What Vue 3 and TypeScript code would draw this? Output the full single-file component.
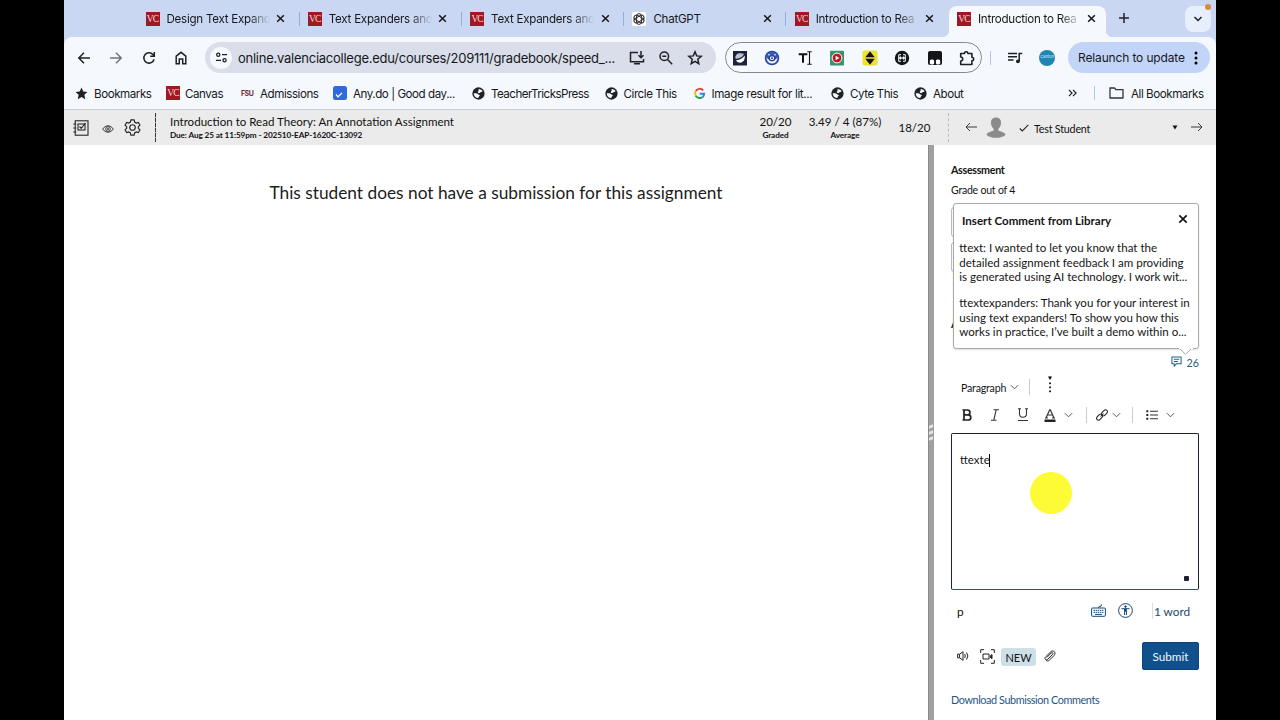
<script setup lang="ts">
import { ref } from 'vue'

interface Tab { title: string; icon: 'vc' | 'gpt'; active?: boolean }
interface Bookmark { label: string; icon: string; cls: string }

const tabs: Tab[] = [
  { title: 'Design Text Expand', icon: 'vc' },
  { title: 'Text Expanders and', icon: 'vc' },
  { title: 'Text Expanders and', icon: 'vc' },
  { title: 'ChatGPT', icon: 'gpt' },
  { title: 'Introduction to Rea', icon: 'vc' },
  { title: 'Introduction to Rea', icon: 'vc', active: true },
]

const bookmarks: Bookmark[] = [
  { label: 'Bookmarks', icon: 'star-solid', cls: 'b-main' },
  { label: 'Canvas', icon: 'vc', cls: 'b-canvas' },
  { label: 'Admissions', icon: 'fsu', cls: 'b-fsu' },
  { label: 'Any.do | Good day...', icon: 'check', cls: 'b-any' },
  { label: 'TeacherTricksPress', icon: 'globe', cls: 'b-ttp' },
  { label: 'Circle This', icon: 'globe', cls: 'b-circle' },
  { label: 'Image result for lit...', icon: 'google', cls: 'b-image' },
  { label: 'Cyte This', icon: 'globe', cls: 'b-cyte' },
  { label: 'About', icon: 'globe', cls: 'b-about' },
]

const extensions = ['e-planet', 'e-ball', 'e-text', 'e-play', 'e-updown', 'e-arrows', 'e-face', 'e-puzzle']

const library = [
  ['ttext: I wanted to let you know that the', 'detailed assignment feedback I am providing', 'is generated using AI technology. I work wit...'],
  ['ttextexpanders: Thank you for your interest in', 'using text expanders! To show you how this', 'works in practice, I’ve built a demo within o...'],
]

const comment = ref('ttexte')
</script>

<template>
  <div class="screen">
    <svg class="defs" aria-hidden="true">
      <symbol id="close" viewBox="0 0 10 10"><path d="M1.3 1.3 8.7 8.7M8.7 1.3 1.3 8.7" fill="none" stroke="currentColor" stroke-width="1.7" /></symbol>
      <symbol id="chev" viewBox="0 0 10 6"><path d="M1 1 5 5 9 1" fill="none" stroke="currentColor" stroke-width="1" /></symbol>
      <symbol id="gpt" viewBox="0 0 14 14">
        <rect width="14" height="14" rx="1.5" fill="#fff" />
        <g fill="none" stroke="#222" stroke-width=".95">
          <rect v-for="n in 3" :key="n" x="4.6" y="1.6" width="4.8" height="10.8" rx="2.4" :transform="`rotate(${n * 60} 7 7)`" />
        </g>
      </symbol>
      <symbol id="star-solid" viewBox="0 0 14 14"><path d="m7 .6 1.900 4.200 4.500.5-3.300 3.100.9 4.700L7 10.700l-4 2.400.9-4.700L.6 5.300l4.500-.5Z" fill="#202124" /></symbol>
      <symbol id="check" viewBox="0 0 14 14"><rect width="14" height="14" rx="2.500" fill="#2f69dd" /><path d="m3 8.500 2 2.300L9 7" fill="none" stroke="#fff" stroke-width="1.200" /></symbol>
      <symbol id="globe" viewBox="0 0 14 14">
        <circle cx="7" cy="7" r="6.600" fill="#202226" />
        <path d="M7.300 2.100c1.800 0 3.300 1 4.100 2.500-.5.800-1.400.9-2 .700-.5 1-1.500 1.200-2.600 1.100-.4 0-.6-.4-.5-.800.100-.8.900-.9.800-1.700-.1-.6-.2-1.200.2-1.800Z" fill="#f5f8fd" />
        <path d="M1.900 6.700c1.600.1 3.500-.1 4.600 1 .5.700 1.600.1 1.900 1 .3.900-.9 1-1 1.800-.1.600-.7 1.300-1.300 1.400-2.400-.3-4.400-2.500-4.200-5.200Z" fill="#f5f8fd" />
      </symbol>
      <symbol id="google" viewBox="0 0 14 14">
        <g fill="none" stroke-width="2.100">
          <path d="M11 3.700A5 5 0 0 0 3 4.300" stroke="#e24335" />
          <path d="M3 4.300a5 5 0 0 0-.1 5.200" stroke="#f4b90a" />
          <path d="M2.900 9.500a5 5 0 0 0 7.500 1.200" stroke="#2f9e51" />
          <path d="M10.400 10.700A5 5 0 0 0 12 7.200H7.200" stroke="#4179e5" />
        </g>
      </symbol>
      <symbol id="e-planet" viewBox="0 0 16 16"><rect x="1" y="1" width="14" height="14.500" fill="#1c2338" /><path d="M3.400 8.500C3 5 5.500 3 8.300 3.200c1.700 0 2.700.8 3.700.3-.2 1.500-1.500 3-3.300 4.100-1.700 1-3.500 1.500-5.300.9Z" fill="#b9c1d2" /><path d="M4 10.300c3.500.3 7-2.200 8.600-4.700.9 3.500-1.200 7.200-4.600 7.200-1.800 0-3.300-1-4-2.500Z" fill="#fff" /></symbol>
      <symbol id="e-ball" viewBox="0 0 16 16"><circle cx="8" cy="8" r="6.400" fill="#eef2ff" stroke="#24459f" stroke-width="1.700" /><path d="M2 8a6 6 0 0 1 12 0Z" fill="#355bb9" /><path d="M3.500 8.500h9" stroke="#24459f" stroke-width="1.500" /><rect x="5.400" y="5.800" width="5.200" height="4.800" rx="2" fill="#fff" stroke="#203d8e" stroke-width="1.200" /><circle cx="8" cy="8.200" r="1" fill="#203d8e" /><circle cx="5" cy="4.700" r=".8" fill="#fff" /><circle cx="11" cy="4.700" r=".8" fill="#fff" /></symbol>
      <symbol id="e-text" viewBox="0 0 16 16"><path d="M1.700 4.200h8.600M6 4v8.700" stroke="#111" stroke-width="2" /><path d="M10.300 1.700h4.400M12.500 1.700v12.600M10.300 14.300h4.400" fill="none" stroke="#111" stroke-width="1.100" /></symbol>
      <symbol id="e-play" viewBox="0 0 16 16"><rect x="1" y=".8" width="14" height="14.600" rx="1" fill="#379369" /><circle cx="8" cy="8" r="4.900" fill="#ba1828" stroke="#fff" stroke-width="1" /><path d="m6.600 5.700 3.800 2.300-3.800 2.300Z" fill="#fff" /></symbol>
      <symbol id="e-updown" viewBox="0 0 16 16"><rect x=".5" y=".5" width="15" height="15" rx="2" fill="#efe22c" /><path d="m8 1.300 4.700 5.900H3.300ZM8 14.700 3.300 8.800h9.400Z" fill="#141414" /></symbol>
      <symbol id="e-arrows" viewBox="0 0 16 16"><circle cx="8" cy="8" r="7.200" fill="#121519" /><path d="M7 4.700H4.700v6.600H7M9 4.700h2.300v6.600H9" fill="none" stroke="#fff" stroke-width="1" /><path d="M5.500 8h5M7 6.700 5.500 8 7 9.300M9 6.700 10.500 8 9 9.300" fill="none" stroke="#fff" stroke-width="1.200" /></symbol>
      <symbol id="e-face" viewBox="0 0 16 16"><rect x="1" y="1" width="14" height="14" rx="2" fill="#121417" /><rect x="2.800" y="9.500" width="4.300" height="5" rx="1.500" fill="#fff" /><rect x="8.900" y="9.500" width="4.300" height="5" rx="1.500" fill="#fff" /></symbol>
      <symbol id="e-puzzle" viewBox="0 0 16 16"><path d="M1.700 3.500h3.800a1.700 1.700 0 0 1 3.400 0h4V7.300a1.700 1.700 0 0 1 0 3.400v3.800H1.700V11a2 2 0 0 0 0-4Z" fill="none" stroke="#202124" stroke-width="1.600" stroke-linejoin="round" /></symbol>
    </svg>

    <div class="window">
      <div class="tabs">
        <div v-for="(t, i) in tabs" :key="i" class="tab" :class="{ active: t.active, sep: i < 4 }">
          <span v-if="t.icon === 'vc'" class="vc">VC</span>
          <svg v-else class="i14"><use href="#gpt" /></svg>
          <span class="title" :class="{ fade: t.icon === 'vc' }">{{ t.title }}</span>
          <svg class="x"><use href="#close" /></svg>
        </div>
        <svg class="plus" viewBox="0 0 12 12"><path d="M6 1v10M1 6h10" stroke="#202124" stroke-width="1.500" /></svg>
        <div class="tabmenu">
          <svg viewBox="0 0 10 6"><path d="M1.500 1 5 4.500 8.500 1" fill="none" stroke="#202124" stroke-width="1.500" /></svg>
          <i class="dot"></i>
        </div>
      </div>

      <div class="toolbar">
        <div class="nav">
          <svg viewBox="0 0 16 16"><path d="M14 8H3M8 2.800 2.800 8 8 13.200" /></svg>
          <svg viewBox="0 0 16 16" class="dim"><path d="M2 8h11M8 2.800 13.200 8 8 13.200" /></svg>
          <svg viewBox="0 0 16 16"><path d="M13.100 9.200A5.200 5.200 0 1 1 12 4.500L13.300 6M13.300 2v4.200H9.200" /></svg>
          <svg viewBox="0 0 16 16"><path d="M3.200 13.700V6.200L8 2.300l4.800 3.900v7.500H9.700V9H6.300v4.700Z" /></svg>
        </div>
        <div class="url">
          <span class="site"><svg viewBox="0 0 14 14"><path d="M7.500 4H13M1 10h5.500" /><circle cx="3.500" cy="4" r="1.700" /><circle cx="10.300" cy="10" r="1.700" /></svg></span>
          <span class="addr">online.valenciacollege.edu/courses/209111/gradebook/speed_...</span>
          <svg viewBox="0 0 16 16"><path d="M9 2.500H1.500v9.200h13V9M5 13.700h6M12 1v6.500M9.500 5.300 12 7.800l2.500-2.500" /></svg>
          <svg viewBox="0 0 16 16"><circle cx="6.300" cy="6.300" r="4.300" /><path d="m9.500 9.500 4.700 4.700M4.300 6.300h4" /></svg>
          <svg viewBox="0 0 16 16"><path d="m8 1.800 1.700 4.100 4.500.4-3.400 3 1 4.400L8 11.400l-3.800 2.300 1-4.400-3.400-3 4.500-.4Z" /></svg>
        </div>
        <div class="exts">
          <svg v-for="e in extensions" :key="e"><use :href="'#' + e" /></svg>
        </div>
        <i class="vsep"></i>
        <svg class="music" viewBox="0 0 16 16"><path d="M1 3.500h9M1 6.700h9M1 9.900h5.500M12.200 11V3.500h3" fill="none" stroke="#202124" stroke-width="1.500" /><circle cx="10.900" cy="11.300" r="1.900" fill="#202124" /></svg>
        <span class="avatar">Canton</span>
        <div class="relaunch"><span>Relaunch to update</span><svg viewBox="0 0 4 14"><circle cx="2" cy="2" r="1.500" /><circle cx="2" cy="7" r="1.500" /><circle cx="2" cy="12" r="1.500" /></svg></div>
      </div>

      <div class="bookmarks">
        <div v-for="b in bookmarks" :key="b.label" class="bm" :class="b.cls">
          <span v-if="b.icon === 'vc'" class="vc">VC</span>
          <span v-else-if="b.icon === 'fsu'" class="fsu">FSU</span>
          <svg v-else class="i14"><use :href="'#' + b.icon" /></svg>
          <span class="label">{{ b.label }}</span>
        </div>
        <svg class="more" viewBox="0 0 10 10"><path d="m1 1.500 3.500 3.500L1 8.500M5.500 1.500 9 5 5.500 8.500" fill="none" stroke="#202124" stroke-width="1.300" /></svg>
        <i class="vsep"></i>
        <svg class="folder" viewBox="0 0 15 12"><path d="M1 1h4.500L7 2.700h7v8.300H1Z" fill="none" stroke="#303338" stroke-width="1.300" stroke-linejoin="round" /></svg>
        <span class="label">All Bookmarks</span>
      </div>

      <header class="grader">
        <svg class="gbook" viewBox="0 0 16 16"><rect x="2.200" y=".8" width="12.800" height="14.400" /><rect x="5" y="4" width="7" height="6" /><path d="M.3 4h3M.3 8h3M.3 12h3M6.500 6.500 8.200 8.300 12.500 3" /></svg>
        <svg class="eye" viewBox="0 0 12 8"><path d="M.6 4Q3 .7 6 .7T11.400 4Q9 7.300 6 7.300T.6 4Z" /><circle cx="6" cy="4" r="2.300" /><circle cx="6" cy="4" r=".6" /></svg>
        <svg class="gear" viewBox="0 0 16 16"><path d="M6.500.8h3l.5 2.100 1.500.9 2-.6L15 5.700l-1.500 1.500v1.600L15 10.300l-1.500 2.500-2-.6-1.500.9-.5 2.100h-3L6 13.100l-1.500-.9-2 .6L1 10.300l1.500-1.500V7.200L1 5.700l1.500-2.500 2 .6L6 2.900Z" /><circle cx="8" cy="8" r="2.600" /></svg>
        <i class="dash"></i>
        <div class="heading">
          <div class="h1">Introduction to Read Theory: An Annotation Assignment</div>
          <div class="h2">Due: Aug 25 at 11:59pm - 202510-EAP-1620C-13092</div>
        </div>
        <div class="stat graded"><b>20/20</b><small>Graded</small></div>
        <div class="stat average"><b>3.49 / 4 (87%)</b><small>Average</small></div>
        <div class="count">18/20</div>
        <div class="student">
          <svg class="arrow" viewBox="0 0 12 10"><path d="M12 5H1M5 1 1 5l4 4" /></svg>
          <svg class="person" viewBox="0 0 20 21"><path d="M10 .5c3.400 0 5.300 2.300 5 5.700-.2 2.600-1.200 4.400-2.600 5.500v1.700c1 1 6.600 1.300 7.100 4.300-2 2.200-5.500 3.100-9.500 3.100S2.500 19.900.5 17.700c.5-3 6.100-3.300 7.100-4.300v-1.700C6.200 10.600 5.200 8.800 5 6.200 4.700 2.800 6.600.5 10 .5Z" fill="#8b8b8b" /></svg>
          <svg class="tick" viewBox="0 0 10 8"><path d="M.8 4.500 3.300 7 9.300.9" /></svg>
          <span class="name">Test Student</span>
          <svg class="caret" viewBox="0 0 6 5"><path d="M.5.500h5L3 4.500Z" /></svg>
          <svg class="arrow" viewBox="0 0 12 10"><path d="M0 5h11M7 1l4 4-4 4" /></svg>
        </div>
      </header>

      <div class="body">
        <main>This student does not have a submission for this assignment</main>
        <div class="split"><i></i><i></i><i></i></div>
        <aside>
          <div class="assess">Assessment</div>
          <div class="grade">Grade out of 4</div>
          <div class="covered">
            <i class="field one"></i>
            <i class="field two"></i>
            <div class="under">A</div>
            <div class="popover">
              <div class="ptitle"><span>Insert Comment from Library</span><svg><use href="#close" /></svg></div>
              <p v-for="(p, i) in library" :key="i"><span v-for="l in p" :key="l">{{ l }}</span></p>
              <svg class="tail" viewBox="0 0 14 7"><path d="M0 0H14V1H12L6.500 6.300 1 1H0Z" fill="#fff" /><path d="M1 1 6.500 6.300 12 1" fill="none" stroke="#aaa" /></svg>
            </div>
          </div>
          <div class="lib">
            <svg viewBox="0 0 12 12"><path d="M1 1h10v7.500H6L3.500 11V8.500H1ZM3 3.500h6M3 6h4.500" fill="none" stroke="#246084" stroke-width="1.100" /></svg>26
          </div>
          <div class="row1">
            <span>Paragraph</span><svg class="ch"><use href="#chev" /></svg><i class="tsep"></i>
            <svg class="kebab" viewBox="0 0 6 18"><path d="M1 .5h4L3 4Z" /><rect x="2.200" y="6.500" width="1.700" height="1.700" /><rect x="2.200" y="10.500" width="1.700" height="1.700" /><rect x="2.200" y="14.500" width="1.700" height="1.700" /></svg>
          </div>
          <div class="row2">
            <svg class="bold" viewBox="0 0 12 12"><path d="M1.500 1h5a2.300 2.300 0 0 1 0 4.800H2.500M2.500 5.800h4.700a2.600 2.600 0 0 1 0 5.200H1.500M3 1v10" fill="none" stroke="#222" stroke-width="1.700" /></svg>
            <svg class="ital" viewBox="0 0 12 12"><path d="M4.500.8H10M2 11.200h5.500M7.200.8l-2.400 10.400" fill="none" stroke="#333" stroke-width="1.100" /></svg>
            <svg class="und" viewBox="0 0 12 14"><path d="M1 .8h3M8 .8h3M2.500.8v5a3.500 3.500 0 0 0 7 0v-5M1 12.500h10" fill="none" stroke="#333" stroke-width="1.100" /></svg>
            <svg class="acol" viewBox="0 0 12 13"><path d="M2 9 5.700.8h.6L10 9M1 9h3M8 9h3M3.500 6h5" fill="none" stroke="#333" stroke-width="1.200" /><rect x=".5" y="10.500" width="11" height="2.500" fill="#222" /></svg>
            <svg class="ch"><use href="#chev" /></svg><i class="tsep"></i>
            <svg class="link" viewBox="0 0 12 12"><g fill="none" stroke="#222" stroke-width="1.050"><rect x=".2" y="6.200" width="6.800" height="3.900" rx="1.900" transform="rotate(-45 3.600 8.200)" /><rect x="5" y="1.900" width="6.800" height="3.900" rx="1.900" transform="rotate(-45 8.400 3.800)" /><path d="m4.500 7.500 3-3" /></g></svg>
            <svg class="ch"><use href="#chev" /></svg><i class="tsep"></i>
            <svg class="list" viewBox="0 0 12 10"><path d="M4 1.200h8M4 5h8M4 8.800h8" stroke="#333" stroke-width="1.100" /><path d="M.3 1.200h2M.3 5h2M.3 8.800h2" stroke="#222" stroke-width="2" /></svg>
            <svg class="ch"><use href="#chev" /></svg>
          </div>
          <div class="editor"><span>{{ comment }}</span><i class="cursor"></i><i class="halo"></i><i class="grip"></i></div>
          <div class="status">
            <span class="p">p</span>
            <svg class="kb" viewBox="0 0 15 13"><rect x=".6" y="4" width="13.800" height="8.300" rx="1" /><path d="M2.500 6.300h10M2.500 8.300h10" stroke-dasharray="1.500 .6" /><path d="M4 10.400h7M7.500 4q0-1.500 1.500-1.500T10.500.5" /></svg>
            <svg class="a11y" viewBox="0 0 15 15"><circle cx="7.500" cy="7.500" r="6.900" /><circle cx="7.500" cy="3.600" r=".8" fill="#154673" /><path d="M3.500 5.700h8M7.500 5.700v3M6.600 6v6M8.400 6v6" /></svg>
            <i class="tsep"></i><span class="words">1 word</span>
          </div>
          <div class="actions">
            <svg class="spk" viewBox="0 0 12 10"><path d="M.6 3.200h2L6 .7v8.600L2.600 6.800h-2ZM2.600 3.200v3.600M7.700 3q1.200 2 0 4M9.500 1.500q2.800 3.500 0 7" /></svg>
            <svg class="cam" viewBox="0 0 15 15"><path d="M.7 4V.7H4M11 .7h3.300V4M14.300 11v3.300H11M4 14.300H.7V11" /><path d="M3 5h6v5H3Z" /><path d="M10.300 6.900 12 5.500v4.200l-1.700-1.400Z" fill="#222" /></svg>
            <span class="new">NEW</span>
            <svg class="clip" viewBox="0 0 12 12"><path d="m2.800 7.500 4.500-4.600c1-1 2.400.4 1.400 1.400L4 9c-2 2-4.200-.3-2.300-2.200L6.500 2C9.300-.7 12.800 2.700 10 5.500l-4.700 4.800c-1 .9-2.300.9-3.300 0" /></svg>
            <button>Submit</button>
          </div>
          <a class="dl">Download Submission Comments</a>
        </aside>
      </div>
    </div>
  </div>
</template>

<style scoped>
* { box-sizing: border-box; }
.screen { width: 1280px; height: 720px; background: #000; padding: 0 64px; overflow: hidden; }
.defs { position: absolute; width: 0; height: 0; }
.window { width: 1152px; height: 720px; background: linear-gradient(#c9d7f3 60px, #fff 60px); font-family: Inter, sans-serif; font-size: 11.600px; color: #17181b; overflow: hidden; }
svg { display: block; flex: none; }
i { display: block; flex: none; }
.i14 { width: 14px; height: 14px; }
.vc { width: 14px; height: 14px; background: #a11722; color: #f4d9dc; font: 9.500px/14px "Liberation Serif", serif; letter-spacing: -.9px; text-align: center; flex: none; }

.tabs { display: flex; height: 37px; background: #c9d7f3; padding: 6px 5px 0 73.500px; }
.tab { position: relative; display: flex; align-items: center; width: 162.300px; height: 31px; padding: 0 0 6px 8px; flex: none; }
.tab.sep::after { content: ""; position: absolute; left: 161px; top: 6px; width: 1px; height: 14px; background: #91aee0; }
.tab.active { width: 157px; background: #f5f8fd; border-radius: 8px 8px 0 0; }
.tab.active::before, .tab.active::after { content: ""; position: absolute; bottom: 0; width: 7px; height: 7px; }
.tab.active::before { left: -7px; background: radial-gradient(circle at 0 0, transparent 7px, #f5f8fd 7.500px); }
.tab.active::after { right: -7px; background: radial-gradient(circle at 100% 0, transparent 7px, #f5f8fd 7.500px); }
.title { width: 103px; margin-left: 7px; white-space: nowrap; letter-spacing: -.27px; }
.title.fade { mask-image: linear-gradient(90deg, #000 80%, transparent 100%); }
.x { width: 9px; height: 9px; margin-left: 6.500px; }
.plus { width: 12px; height: 12px; margin: 6px 0 0 12px; }
.tabmenu { position: relative; margin-left: auto; width: 26px; height: 26px; border-radius: 8px; background: #e8effc; display: flex; align-items: center; justify-content: center; }
.tabmenu svg { width: 10px; height: 6px; }
.dot { position: absolute; right: 0; top: -2px; width: 6px; height: 6px; border-radius: 50%; background: #dd8a3b; }

.toolbar { height: 40px; background: #f5f8fd; border-radius: 8px 8px 0 0; display: flex; align-items: center; padding: 1px 6px 0 12px; }
.nav { display: flex; gap: 16.300px; width: 129px; }
.nav svg, .url > svg { width: 16px; height: 16px; fill: none; stroke: #202124; stroke-width: 1.500; }
.nav .dim { stroke: #70757c; }
.url { width: 511px; height: 31px; border-radius: 16px; background: #d9deea; display: flex; align-items: center; padding: 0 13px 0 5px; }
.site { width: 22px; height: 22px; border-radius: 50%; background: #f6f9fe; display: flex; align-items: center; justify-content: center; }
.site svg { width: 13px; height: 13px; fill: none; stroke: #202124; stroke-width: 1.400; }
.addr { font-size: 13px; letter-spacing: -.25px; width: 391px; margin-left: 6px; white-space: nowrap; }
.url > svg + svg { margin-left: 13px; }
.exts { width: 257px; height: 31px; border: 1px solid #85888f; border-radius: 16px; margin-left: 9px; display: flex; align-items: center; justify-content: space-between; padding: 0 6px; }
.exts svg { width: 16px; height: 16px; }
.vsep { width: 1px; height: 14px; background: #b3c6ea; }
.toolbar .vsep { margin-left: 8px; }
.music { width: 16px; height: 16px; margin-left: 16px; }
.avatar { width: 16px; height: 16px; border-radius: 50%; background: #2085b5; color: #d8f1fb; font-size: 4px; line-height: 14px; text-align: center; margin-left: 16px; }
.relaunch { width: 142px; height: 31px; border-radius: 16px; background: #c2d5f8; margin-left: 13px; display: flex; align-items: center; padding-left: 10px; font-size: 12px; letter-spacing: -.14px; white-space: nowrap; }
.relaunch span { width: 116px; }
.relaunch svg { width: 4px; height: 14px; }

.bookmarks { height: 33px; background: #f5f8fd; border-bottom: 1px solid #c6cbd4; display: flex; align-items: center; white-space: nowrap; padding-left: 11px; letter-spacing: -.45px; }
.label { margin-top: 1px; }
.bm { display: flex; align-items: center; gap: 6px; flex: none; }
.b-main { width: 91px; }
.b-canvas { width: 75px; gap: 5px; }
.b-fsu { width: 92px; gap: 5px; }
.b-any { width: 139px; }
.b-ttp { width: 132.500px; letter-spacing: -.55px; }
.b-circle { width: 88px; }
.b-image { width: 138.500px; letter-spacing: -.35px; }
.b-cyte { width: 83px; }
.b-about { width: 154px; }
.bm svg { width: 13px; height: 13px; }
.b-any svg { width: 14px; height: 14px; }
.fsu { width: 14px; font-size: 7px; color: #762c35; font-weight: 700; letter-spacing: -.5px; }
.more { width: 9px; height: 10px; }
.bookmarks .vsep { margin-left: 17px; }
.folder { width: 15px; height: 12px; margin: 0 7px 0 14px; }

.grader { height: 35px; background: #ebebeb; display: flex; align-items: center; font-family: Lato, sans-serif; color: #111; white-space: nowrap; }
.grader svg { fill: none; stroke: #262626; stroke-width: 1.100; }
.gbook { width: 16px; height: 16px; margin-left: 8.500px; }
.eye { width: 12px; height: 8px; margin: 2px 0 0 13px; }
.grader .eye { stroke-width: .9; }
.gear { width: 17px; height: 17px; margin-left: 10.500px; }
.dash { width: 1px; height: 29px; margin-left: 13.500px; background: repeating-linear-gradient(#333 0 4px, #aaa 4px 5px); }
.heading { width: 584px; margin-left: 14.500px; }
.h1 { font-size: 11.550px; line-height: 14px; margin-top: 1px; }
.h2 { font-size: 8.200px; letter-spacing: -.1px; font-weight: 700; line-height: 13px; }
.stat { display: flex; flex-direction: column; align-items: center; margin-top: 1px; }
.stat b { font-weight: 400; font-size: 11.600px; line-height: 14px; }
.stat small { font-size: 8.200px; letter-spacing: -.1px; font-weight: 700; line-height: 13px; }
.graded { width: 43px; }
.average { width: 76px; margin-left: 10px; }
.count { font-size: 11.500px; width: 49.500px; margin: 0 0 0 15.500px; }
.student { display: flex; align-items: center; height: 29px; border-left: 1px dashed #bbb; flex: 1; padding-left: 16px; }
.arrow { width: 12px; height: 10px; margin-top: -2px; }
.grader .arrow { stroke-width: .9; }
.person { width: 20px; height: 21px; margin-left: 9px; }
.grader .person { stroke: none; }
.tick { width: 10px; height: 8px; margin-left: 13px; }
.name { font-size: 10.700px; letter-spacing: -.2px; width: 138px; margin: 1px 0 0 5px; }
.caret { width: 6px; height: 5px; margin-right: 12.500px; }
.grader .caret { fill: #111; stroke: none; }

.body { display: flex; height: 575px; font-family: Lato, sans-serif; background: #fff; }
main { width: 864px; padding-top: 36px; text-align: center; font-size: 17.300px; line-height: 24px; color: #1c1c1c; }
.split { width: 6px; background: #a0a0a0; border-left: 1px solid #898989; display: flex; flex-direction: column; justify-content: center; gap: 3px; }
.split i { width: 4px; height: 3px; background: #e6e6e6; transform: skewY(-20deg); }
aside { width: 282px; padding: 17px 17px 0 17px; color: #151515; }
.assess { font-size: 10.700px; letter-spacing: -.3px; font-weight: 700; line-height: 16px; }
.grade { font-size: 10.500px; letter-spacing: -.2px; line-height: 15px; margin: 5px 0 -1px; }
.covered { position: relative; height: 157px; padding-top: 10px; }
.field { width: 20px; height: 30px; border: 1px solid #bbb; border-radius: 3px; }
.field.two { margin-top: 5px; }
.under { font-size: 11px; font-weight: 700; margin-top: 44px; line-height: 15px; width: 8px; }
.popover { position: absolute; left: 2px; top: 6px; width: 246px; height: 146px; border: 1px solid #aaa; border-radius: 3px; background: #fff; padding: 9px 5px 0; box-shadow: 0 1px 2px #0002; }
.ptitle { display: flex; justify-content: space-between; padding: 0 5px 0 3px; font-size: 11.550px; font-weight: 700; line-height: 16px; margin-bottom: 12px; }
.ptitle svg { width: 10px; height: 10px; margin-top: 1px; }
.popover p { margin: 0 0 11.500px; padding-left: .3px; font-size: 11.550px; line-height: 14.500px; white-space: nowrap; }
.popover p span { display: block; }
.tail { position: absolute; right: 5px; bottom: -7px; width: 14px; height: 7px; }
.lib { display: flex; justify-content: flex-end; align-items: center; gap: 5px; height: 16px; font-size: 10.700px; color: #246084; }
.lib svg { width: 11px; height: 11px; margin-top: -1px; }
.ch { width: 9px; height: 6px; color: #444; }
.tsep { width: 1px; height: 16px; background: #ccc; }
.row1 { display: flex; align-items: center; height: 30px; margin-top: 2px; padding-left: 10px; font-size: 10.600px; letter-spacing: -.2px; }
.row1 span { width: 44px; margin-top: 1px; }
.row1 .ch { margin-left: 5px; }
.row1 .tsep { margin-left: 10px; }
.kebab { width: 6px; height: 18px; margin: -5px 0 0 16.500px; }
.row2 { display: flex; align-items: center; height: 26px; padding-left: 10px; }
.bold, .ital, .und, .acol, .link, .list { width: 12px; height: 12px; }
.ital { margin-left: 16px; }
.und { margin-left: 15.500px; height: 14px; }
.acol { height: 13px; margin-left: 15px; }
.row2 .ch { margin-left: 8.500px; }
.row2 .tsep { margin-left: 13px; }
.link { margin-left: 9px; }
.row2 .link + .ch { margin-left: 4px; }
.row2 .link + .ch + .tsep { margin-left: 11px; }
.list { margin-left: 13px; height: 10px; }
.row2 .list + .ch { margin-left: 8px; }
.editor { position: relative; display: flex; align-items: flex-start; height: 157px; margin-top: 5px; border: 1px solid #1c2233; border-bottom-color: #2f5560; border-radius: 2px; padding: 18px 8px; font-size: 11.500px; line-height: 16px; }
.cursor { width: 1px; height: 13px; background: #000; margin: 2px 0 0 -1px; }
.halo { position: absolute; left: 78px; top: 38px; width: 42px; height: 42px; border-radius: 50%; background: #fdfb35; }
.grip { position: absolute; right: 9px; bottom: 8px; width: 5px; height: 5px; border-radius: 1px; background: #1c2233; }
.status { display: flex; align-items: center; height: 45px; padding-left: 6px; font-size: 11.800px; color: #1a4872; white-space: nowrap; }
.status svg, .actions svg { fill: none; stroke: #154673; stroke-width: 1; }
.p { width: 134px; color: #111; margin-top: -3px; }
.kb { width: 15px; height: 13px; margin-top: -5px; }
.a11y { width: 15px; height: 15px; margin: -5px 0 0 12px; }
.status .tsep { margin: -4px 1px 0 19px; background: #ddd; }
.words { margin-top: -2px; }
.actions { display: flex; align-items: center; height: 28px; margin-top: 7px; padding-left: 6px; }
.actions svg { stroke: #222; }
.spk { width: 12px; height: 10px; }
.cam { width: 15px; height: 15px; margin-left: 11px; }
.new { width: 35px; height: 18px; border-radius: 3px; background: #cfdfe8; font-size: 11px; line-height: 19px; text-align: center; margin: 1px 0 0 6px; }
.clip { width: 12px; height: 12px; margin-left: 8px; }
button { margin: 0 0 0 auto; width: 57px; height: 28px; border: 1px solid #0c4678; border-radius: 2px; background: #10518d; color: #f3f7fb; font: 11.700px Lato, sans-serif; padding: 0; }
.dl { display: block; margin-top: 21px; font-size: 10.800px; letter-spacing: -.38px; line-height: 17px; color: #1d5486; }
</style>

<style>
body { overflow: hidden; }
</style>
